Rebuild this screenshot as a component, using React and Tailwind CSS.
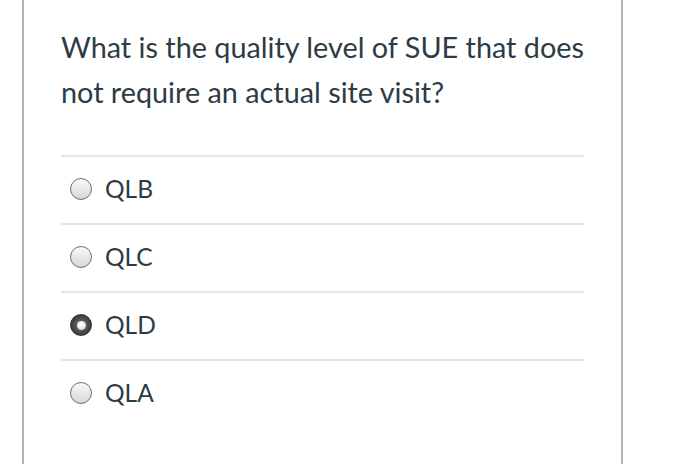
import React from "react";

const options = [
  { label: "QLB", selected: false },
  { label: "QLC", selected: false },
  { label: "QLD", selected: true },
  { label: "QLA", selected: false },
];

function Radio({ selected }) {
  if (selected) {
    return (
      <span className="flex h-[22px] w-[22px] shrink-0 items-center justify-center rounded-full border border-[#333] bg-[radial-gradient(circle,#777_0%,#444_60%,#2a2a2a_100%)]">
        <span className="h-[9px] w-[9px] rounded-full bg-[radial-gradient(circle_at_40%_35%,#fff_0%,#e4e4e4_60%,#bbb_100%)]" />
      </span>
    );
  }
  return (
    <span className="h-[22px] w-[22px] shrink-0 rounded-full border-[1.5px] border-[#6f6f6f] bg-gradient-to-b from-[#fafafa] to-[#d6d6d6]" />
  );
}

export default function App() {
  return (
    <div className="h-[467px] w-[700px] bg-white font-['Lato','Liberation_Sans',sans-serif] text-[#2d3b45]">
      <div className="ml-[22px] h-[464px] w-[601px] border-x-2 border-[#b4b4b4] px-[37px] pt-[25px]">
        <p className="text-[28.8px] leading-[45px]">
          What is the quality level of SUE that does not require an actual site visit?
        </p>
        <div className="mt-[40px]">
          {options.map((o) => (
            <div
              key={o.label}
              className="flex h-[68px] items-center gap-[13px] border-t-2 border-[#e4e4e4] pb-[2px] pl-[9px]"
            >
              <Radio selected={o.selected} />
              <span className="text-[24.5px]">{o.label}</span>
            </div>
          ))}
        </div>
      </div>
    </div>
  );
}
